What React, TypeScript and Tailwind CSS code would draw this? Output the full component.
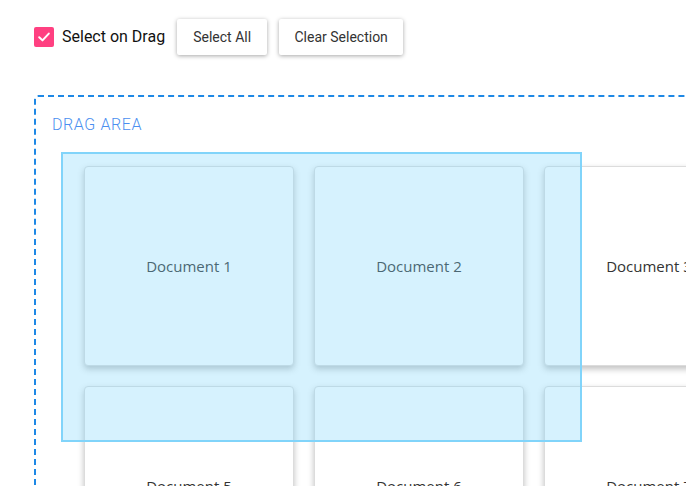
import React from "react";

const docs = Array.from({ length: 8 }, (_, i) => `Document ${i + 1}`);

export default function App() {
  return (
    <div className="relative h-screen w-full overflow-hidden bg-white font-['Roboto',sans-serif]">
      <div className="flex items-center pl-[34px] pt-[19px]">
        <label className="flex items-center">
          <span className="flex h-[20px] w-[20px] items-center justify-center rounded-[2px] bg-[#ff4081]">
            <svg width="14" height="14" viewBox="0 0 14 14" fill="none">
              <path d="M2.2 7.2 L5.5 10.4 L11.8 3.6" stroke="white" strokeWidth="2" strokeLinecap="round" strokeLinejoin="round" />
            </svg>
          </span>
          <span className="ml-[8px] text-[16px] leading-none text-[#111]">Select on Drag</span>
        </label>
        <button className="ml-[12px] h-[36px] w-[90px] rounded-[2px] bg-white text-[14px] text-[#333] shadow-[0_1px_4px_rgba(0,0,0,0.35)]">
          Select All
        </button>
        <button className="ml-[12px] h-[36px] w-[124px] rounded-[2px] bg-white text-[14px] text-[#333] shadow-[0_1px_4px_rgba(0,0,0,0.35)]">
          Clear Selection
        </button>
      </div>

      <div className="ml-[34px] mt-[40px] w-[1000px] rounded-[4px] border-2 border-dashed border-[#1e88e5] pb-[20px]">
        <div className="pl-[16px] pt-[18px] text-[16px] font-light leading-[20px] tracking-[0.6px] text-[#4b8ff0]">
          DRAG AREA
        </div>
        <div className="ml-[48px] mt-[31px] grid w-[900px] grid-cols-[repeat(4,210px)] gap-[20px]">
          {docs.map((d) => (
            <div
              key={d}
              className="flex h-[200px] items-center justify-center rounded-[4px] border border-[#dcdcdc] bg-white font-['Open_Sans',sans-serif] text-[15px] text-[#333] shadow-[0_3px_6px_rgba(0,0,0,0.25)]"
            >
              {d}
            </div>
          ))}
        </div>
      </div>

      <div className="absolute left-[61px] top-[152px] h-[290px] w-[521px] border-2 border-[#81d4fa] bg-[#7fd6fb]/[0.32]" />
    </div>
  );
}
